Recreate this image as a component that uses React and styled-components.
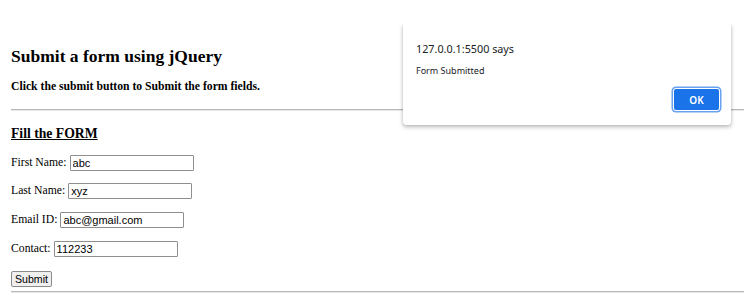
import React from "react";
import styled, { createGlobalStyle } from "styled-components";

const Global = createGlobalStyle`
  html, body { margin: 0; padding: 0; background: #fff; }
  body { font-family: "Liberation Serif", "Times New Roman", serif; color: #000; }
  * { box-sizing: border-box; }
`;

const Page = styled.div`
  position: relative;
  width: 744px;
  height: 304px;
  overflow: hidden;
  padding-left: 11px;
  display: flex;
  flex-direction: column;
`;

const Title = styled.h2`
  margin: 46px 0 0;
  font-size: 17.5px;
  line-height: 20px;
  font-weight: bold;
`;

const Subtitle = styled.h4`
  margin: 14px 0 0;
  font-size: 11.7px;
  line-height: 14px;
  font-weight: bold;
`;

const Rule = styled.hr`
  margin: ${(p) => p.$top}px 0 0;
  border: 0;
  border-top: 1px solid #b9b9b9;
  border-bottom: 1px solid #e6e6e6;
  height: 0;
  width: 100%;
`;

const FormTitle = styled.h3`
  margin: 15px 0 0;
  font-size: 13.7px;
  line-height: 16px;
  font-weight: bold;
  text-decoration: underline;
  text-underline-offset: 1px;
`;

const Form = styled.form`
  display: flex;
  flex-direction: column;
  align-items: flex-start;
  gap: 12.67px;
  margin-top: 12.6px;
`;

const Row = styled.label`
  display: flex;
  align-items: center;
  gap: 3px;
  height: 16px;
  font-size: 11.7px;
  line-height: 16px;
`;

const Field = styled.input`
  width: 124px;
  height: 16px;
  padding: 0 2px;
  border: 1px solid #8f8f8f;
  border-radius: 1px;
  font-family: "Liberation Sans", Arial, sans-serif;
  font-size: 11px;
  color: #000;
  background: #fff;
  outline: none;
`;

const SubmitButton = styled.button`
  margin-top: 1.4px;
  width: 41px;
  height: 16px;
  padding: 0;
  border: 1px solid #8a8a8a;
  border-radius: 2px;
  background: #efefef;
  font-family: "Liberation Sans", Arial, sans-serif;
  font-size: 10.6px;
  color: #000;
`;

const Dialog = styled.div`
  position: absolute;
  left: 403px;
  top: 24px;
  width: 328px;
  height: 101px;
  background: #fff;
  border-radius: 0 0 3px 3px;
  box-shadow: 0 2px 4px rgba(0, 0, 0, 0.28), 0 0 1px rgba(0, 0, 0, 0.25);
  padding: 18px 11px 14px 13px;
  display: flex;
  flex-direction: column;
  font-family: "Noto Sans", "Open Sans", sans-serif;
  clip-path: inset(0 -8px -8px -8px);
`;

const DialogTitle = styled.div`
  font-size: 10.8px;
  line-height: 14px;
  color: #202124;
`;

const DialogMessage = styled.div`
  margin-top: 8.6px;
  font-size: 9px;
  line-height: 12px;
  color: #202124;
`;

const DialogActions = styled.div`
  margin-top: auto;
  display: flex;
  justify-content: flex-end;
`;

const OkButton = styled.button`
  width: 47px;
  height: 23px;
  border: 0;
  border-radius: 3px;
  background: #1a73e8;
  color: #fff;
  font-family: "Noto Sans", "Open Sans", sans-serif;
  font-weight: 600;
  font-size: 10px;
  box-shadow: 0 0 0 1px #fff inset, 0 0 0 1.5px #6aa1f0;
  padding: 0;
`;

const fields = [
  { label: "First Name:", value: "abc" },
  { label: "Last Name:", value: "xyz" },
  { label: "Email ID:", value: "abc@gmail.com" },
  { label: "Contact:", value: "112233" },
];

export default function App() {
  return (
    <>
      <Global />
      <Page>
        <Title>Submit a form using jQuery</Title>
        <Subtitle>Click the submit button to Submit the form fields.</Subtitle>
        <Rule $top={15} />
        <FormTitle>Fill the FORM</FormTitle>
        <Form onSubmit={(e) => e.preventDefault()}>
          {fields.map((f) => (
            <Row key={f.label}>
              {f.label}
              <Field defaultValue={f.value} />
            </Row>
          ))}
          <SubmitButton type="submit">Submit</SubmitButton>
        </Form>
        <Rule $top={4} />
        <Dialog>
          <DialogTitle>127.0.0.1:5500 says</DialogTitle>
          <DialogMessage>Form Submitted</DialogMessage>
          <DialogActions>
            <OkButton>OK</OkButton>
          </DialogActions>
        </Dialog>
      </Page>
    </>
  );
}
